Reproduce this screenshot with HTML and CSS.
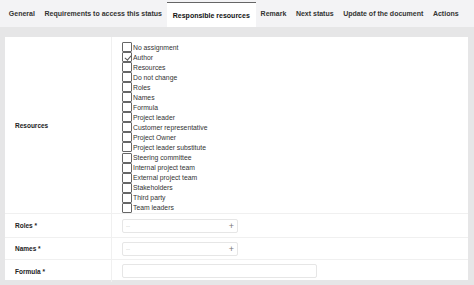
FILE: index.html
```html
<!DOCTYPE html>
<html lang="en">
<head>
  <meta charset="UTF-8" />
  <title>Status - Responsible resources</title>
  <link rel="stylesheet" href="styles.css">
</head>
<body>
  <nav class="tabs">
    <a class="tab">General</a>
    <a class="tab">Requirements to access this status</a>
    <a class="tab active">Responsible resources</a>
    <a class="tab">Remark</a>
    <a class="tab">Next status</a>
    <a class="tab">Update of the document</a>
    <a class="tab">Actions</a>
  </nav>

  <div class="content">
    <div class="panel">
      <div class="row row-resources">
        <div class="label">Resources</div>
        <div class="field">
          <ul class="checks">
            <li><span class="box"></span>No assignment</li>
            <li><span class="box checked"></span>Author</li>
            <li><span class="box"></span>Resources</li>
            <li><span class="box"></span>Do not change</li>
            <li><span class="box"></span>Roles</li>
            <li><span class="box"></span>Names</li>
            <li><span class="box"></span>Formula</li>
            <li><span class="box"></span>Project leader</li>
            <li><span class="box"></span>Customer representative</li>
            <li><span class="box"></span>Project Owner</li>
            <li><span class="box"></span>Project leader substitute</li>
            <li><span class="box"></span>Steering committee</li>
            <li><span class="box"></span>Internal project team</li>
            <li><span class="box"></span>External project team</li>
            <li><span class="box"></span>Stakeholders</li>
            <li><span class="box"></span>Third party</li>
            <li><span class="box"></span>Team leaders</li>
          </ul>
        </div>
      </div>
      <div class="row row-small">
        <div class="label">Roles *</div>
        <div class="field">
          <div class="select"><span class="empty">--</span><span class="plus">+</span></div>
        </div>
      </div>
      <div class="row row-small">
        <div class="label">Names *</div>
        <div class="field">
          <div class="select"><span class="empty">--</span><span class="plus">+</span></div>
        </div>
      </div>
      <div class="row row-small">
        <div class="label">Formula *</div>
        <div class="field">
          <div class="input"></div>
        </div>
      </div>
    </div>
  </div>
</body>
</html>
```

FILE: styles.css
```css
body {
  margin: 0;
  font-family: "Liberation Sans", Arial, sans-serif;
  color: #222;
  background: #e6e6e7;
  height: 285px;
  overflow: hidden;
}

/* Tabs */
.tabs {
  display: flex;
  height: 27px;
  padding-left: 4px;
  background: #f3f3f5;
  font-size: 7px;
  font-weight: bold;
}
.tab {
  display: flex;
  align-items: center;
  padding: 0 4.8px;
  color: #333;
}
.tab.active {
  margin-top: 2px;
  padding: 0 6px;
  background: #fff;
  border-top: 1px solid #666;
  color: #111;
}

/* Panel */
.content {
  padding: 10px 6px 5px 5px;
}
.panel {
  background: #fff;
  height: 243px;
}
.row {
  display: flex;
  border-bottom: 1px solid #f0f0f0;
}
.row:last-child { border-bottom: none; }
.label {
  width: 96px;
  padding-left: 10px;
  display: flex;
  align-items: center;
  border-right: 1px solid #f0f0f0;
  font-size: 6.5px;
  font-weight: bold;
}
.field {
  flex: 1;
  padding-left: 10px;
  display: flex;
  align-items: center;
}
.row-resources { height: 176px; }
.row-small { height: 22px; }
.row-small:nth-child(2) { height: 23px; }
.row-small:nth-child(3) { height: 21px; }

.checks {
  list-style: none;
  margin: 0;
  padding: 5px 0 0;
  align-self: flex-start;
  font-size: 6.8px;
  color: #333;
}
.checks li {
  display: flex;
  align-items: center;
  height: 10.05px;
}
.box {
  width: 8px;
  height: 8px;
  border: 1px solid #666;
  border-radius: 1px;
  margin-right: 1px;
  position: relative;
}
.box.checked::after {
  content: "";
  position: absolute;
  left: 2.5px;
  top: 0.5px;
  width: 2.5px;
  height: 5px;
  border: solid #555;
  border-width: 0 1px 1px 0;
  transform: rotate(40deg);
}

.select, .input {
  height: 14px;
  border: 1px solid #e6e6e6;
  border-radius: 2px;
  display: flex;
  align-items: center;
  justify-content: space-between;
  padding: 0 3px;
  box-sizing: border-box;
}
.select { width: 116px; }
.input { width: 195px; }
.empty { font-size: 6px; color: #ccc; }
.plus { font-size: 9px; color: #777; }
```
